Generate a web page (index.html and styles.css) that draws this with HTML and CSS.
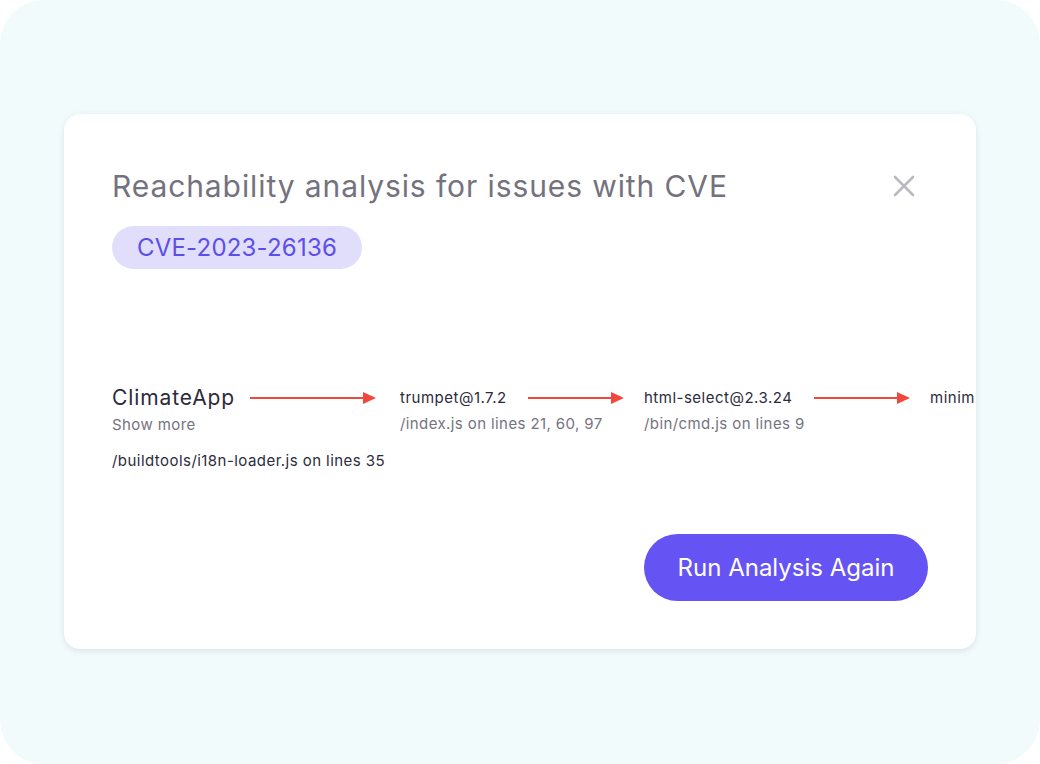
FILE: index.html
```html
<!DOCTYPE html>
<html>
<head>
<meta charset="utf-8">
<link rel="stylesheet" href="styles.css">
</head>
<body>
<div class="backdrop">
  <div class="card">
    <div class="header">
      <h1 class="title">Reachability analysis for issues with CVE</h1>
      <button class="close" aria-label="Close">
        <svg width="22" height="22" viewBox="0 0 22 22"><path d="M2 2 L20 20 M20 2 L2 20" stroke="#b9b9c4" stroke-width="2.6" stroke-linecap="round" fill="none"/></svg>
      </button>
    </div>
    <div class="chip">CVE-2023-26136</div>

    <div class="flow">
      <div class="node node-root">
        <div class="root-name">ClimateApp</div>
        <div class="show-more">Show more</div>
        <div class="root-path">/buildtools/i18n-loader.js on lines 35</div>
      </div>
      <div class="arrow arrow-long"><span class="shaft"></span><span class="head"></span></div>
      <div class="node node-2">
        <div class="pkg">trumpet@1.7.2</div>
        <div class="loc">/index.js on lines 21, 60, 97</div>
      </div>
      <div class="arrow"><span class="shaft"></span><span class="head"></span></div>
      <div class="node node-3">
        <div class="pkg">html-select@2.3.24</div>
        <div class="loc">/bin/cmd.js on lines 9</div>
      </div>
      <div class="arrow"><span class="shaft"></span><span class="head"></span></div>
      <div class="node node-4">
        <div class="pkg">minim</div>
      </div>
    </div>

    <div class="actions">
      <button class="primary">Run Analysis Again</button>
    </div>
  </div>
</div>
</body>
</html>
```
FILE: styles.css
```css
* { box-sizing: border-box; }
html, body { margin: 0; padding: 0; background: #ffffff; }
body { font-family: Inter, "Noto Sans", sans-serif; }

.backdrop {
  width: 1040px;
  height: 764px;
  background: #f2fbfc;
  border-radius: 44px;
  padding: 114px 64px 0 64px;
}

.card {
  width: 912px;
  height: 535px;
  background: #ffffff;
  border-radius: 16px;
  box-shadow: 0 2px 6px rgba(30, 60, 80, 0.12);
  padding: 52px 48px 0 48px;
  overflow: hidden;
  position: relative;
}

.header {
  display: flex;
  align-items: center;
  justify-content: space-between;
  height: 40px;
}

.title {
  margin: 0;
  font-size: 30px;
  font-weight: 400;
  color: #74727e;
  letter-spacing: 0.9px;
}

.close {
  border: 0;
  background: none;
  padding: 0;
  width: 22px;
  height: 22px;
  margin-right: 13px;
  display: flex;
}

.chip {
  display: inline-block;
  margin-top: 20px;
  height: 43px;
  line-height: 43px;
  padding: 0 25px;
  border-radius: 22px;
  background: #e1defc;
  color: #5c4ee8;
  font-size: 24px;
  letter-spacing: 0.2px;
}

.flow {
  display: flex;
  align-items: flex-start;
  margin-top: 114px;
  white-space: nowrap;
}

.node { flex: none; }
.node-root { width: 138px; }
.node-2 { width: 128px; }
.node-3 { width: 170px; }

.root-name {
  font-size: 21px;
  line-height: 30px;
  color: #2c2b3c;
  letter-spacing: 0.9px;
}
.show-more {
  font-size: 15px;
  line-height: 22px;
  color: #75737f;
  margin-top: 1px;
  letter-spacing: 0.4px;
}
.root-path {
  font-size: 15px;
  line-height: 22px;
  color: #2c2b3c;
  margin-top: 14px;
  letter-spacing: 0.45px;
}

.pkg {
  font-size: 15px;
  line-height: 22px;
  color: #2c2b3c;
  margin-top: 4px;
  letter-spacing: 0.5px;
}
.loc {
  font-size: 15px;
  line-height: 22px;
  color: #75737f;
  margin-top: 4px;
  letter-spacing: 0.4px;
}

.arrow {
  flex: none;
  display: flex;
  align-items: center;
  width: 96px;
  height: 14px;
  margin: 8px 20px 0 0;
}
.arrow-long {
  width: 126px;
  margin-right: 24px;
}
.arrow .shaft {
  flex: 1;
  height: 2px;
  background: #f2473d;
}
.arrow .head {
  width: 0;
  height: 0;
  border-top: 6.5px solid transparent;
  border-bottom: 6.5px solid transparent;
  border-left: 13px solid #f2473d;
}

.actions {
  display: flex;
  justify-content: flex-end;
  margin-top: 62px;
}
.primary {
  border: 0;
  background: #6653f3;
  color: #ffffff;
  font-family: Inter, "Noto Sans", sans-serif;
  font-size: 24px;
  height: 67px;
  width: 284px;
  border-radius: 34px;
}
```
